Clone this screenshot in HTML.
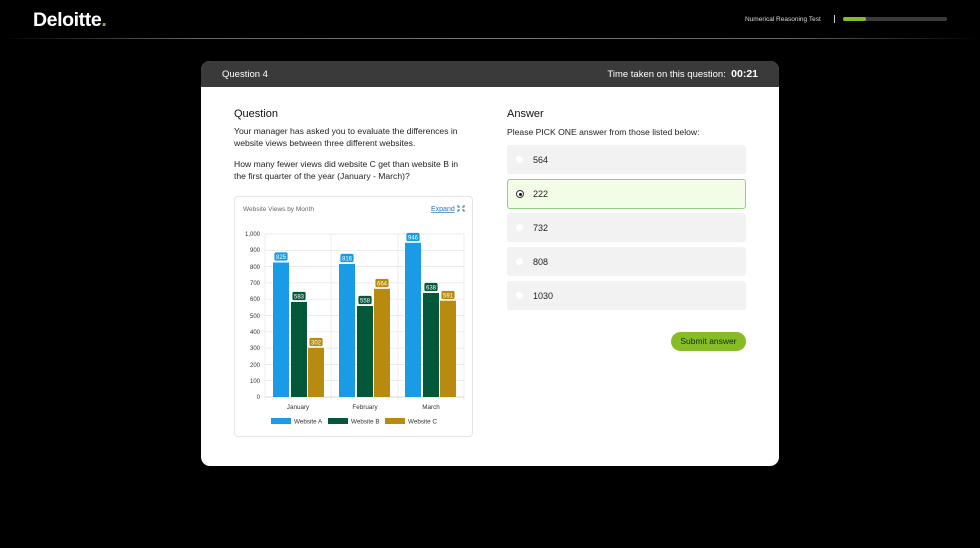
<!DOCTYPE html>
<html><head><meta charset="utf-8"><style>
*{margin:0;padding:0;box-sizing:border-box}
body{width:980px;height:548px;background:#000;font-family:"Liberation Sans",Arial,sans-serif;position:relative;overflow:hidden}
.abs{position:absolute}
.logo{left:33px;top:9px;color:#fff;font-weight:bold;font-size:19.5px;letter-spacing:-0.4px}
.logo span{color:#86bc25}
.hr{left:0;top:38px;width:980px;height:1px;background:linear-gradient(90deg,#000,#666 20%,#777 50%,#666 80%,#000)}
.card{left:201px;top:61px;width:578px;height:405px;background:#fff;border-radius:9px;overflow:hidden}
.hd{left:0;top:0;width:578px;height:26px;background:#3a3a3a;color:#fff;font-size:9px}
.opt{left:507px;width:239px;height:29px;background:#f2f2f2;border-radius:3px;font-size:9px;color:#222}
.opt .r{position:absolute;left:9px;top:11px;width:7px;height:7px;border-radius:50%;background:#fff}
.opt .t{position:absolute;left:26px;top:10px}
p.txt{font-size:8.6px;color:#222;line-height:12px}
</style></head><body>
<div class="abs logo">Deloitte<span>.</span></div>
<div class="abs" style="left:745px;top:16px;color:#ddd;font-size:6.5px">Numerical Reasoning Test</div>
<div class="abs" style="left:834px;top:15px;width:1px;height:8px;background:#ccc"></div>
<div class="abs" style="left:843px;top:17px;width:104px;height:4px;background:#3a3a3a;border-radius:2px"></div>
<div class="abs" style="left:843px;top:17px;width:23px;height:4px;background:#86bc25;border-radius:2px"></div>
<div class="abs hr"></div>
<div class="abs card">
 <div class="abs hd"><span class="abs" style="left:21px;top:8px;font-size:9.5px">Question 4</span><span class="abs" style="right:21px;top:7px;font-size:9.5px">Time taken on this question:&nbsp; <b style="font-size:10.5px">00:21</b></span></div>
</div>
<div class="abs" style="left:234px;top:108px;font-size:11px;color:#111">Question</div>
<p class="abs txt" style="left:234px;top:125px;width:250px">Your manager has asked you to evaluate the differences in<br>website views between three different websites.</p>
<p class="abs txt" style="left:234px;top:158px;width:250px">How many fewer views did website C get than website B in<br>the first quarter of the year (January - March)?</p>
<div class="abs" style="left:234px;top:196px;width:239px;height:241px;border:1px solid #e6e6e6;border-radius:4px"></div>
<svg class="abs" style="left:0;top:0" width="980" height="548" font-family="Liberation Sans,Arial,sans-serif">
<text x="243" y="211" font-size="6.5" fill="#666">Website Views by Month</text>
<text x="431" y="211" font-size="7" fill="#2a7ab0" text-decoration="underline">Expand</text>
<path d="M458 205v2h2M464 205v2h-2M458 212v-2h2M464 212v-2h-2" stroke="#2a7ab0" fill="none" stroke-width="1"/>
<g stroke="#e4e4e4" stroke-width="0.7">
<line x1="265" y1="234" x2="464" y2="234"/><line x1="265" y1="250.3" x2="464" y2="250.3"/><line x1="265" y1="266.6" x2="464" y2="266.6"/><line x1="265" y1="282.9" x2="464" y2="282.9"/><line x1="265" y1="299.2" x2="464" y2="299.2"/><line x1="265" y1="315.5" x2="464" y2="315.5"/><line x1="265" y1="331.8" x2="464" y2="331.8"/><line x1="265" y1="348.1" x2="464" y2="348.1"/><line x1="265" y1="364.4" x2="464" y2="364.4"/><line x1="265" y1="380.7" x2="464" y2="380.7"/>
<line x1="265" y1="234" x2="265" y2="400"/><line x1="331" y1="234" x2="331" y2="400"/><line x1="398" y1="234" x2="398" y2="400"/><line x1="464" y1="234" x2="464" y2="400"/>
</g>
<line x1="265" y1="397" x2="464" y2="397" stroke="#ccc" stroke-width="0.8"/>
<g font-size="6" fill="#333" text-anchor="end">
<text x="260" y="236">1,000</text><text x="260" y="252">900</text><text x="260" y="269">800</text><text x="260" y="285">700</text><text x="260" y="301">600</text><text x="260" y="318">500</text><text x="260" y="334">400</text><text x="260" y="350">300</text><text x="260" y="367">200</text><text x="260" y="383">100</text><text x="260" y="399">0</text>
</g>
<g font-size="6.3" fill="#333" text-anchor="middle"><text x="298" y="409">January</text><text x="365" y="409">February</text><text x="431" y="409">March</text></g>
<g>
<rect x="273" y="262.5" width="16" height="134.5" fill="#1a9be6"/>
<rect x="291" y="302" width="16" height="95" fill="#04583a"/>
<rect x="308" y="347.8" width="16" height="49.2" fill="#b88a10"/>
<rect x="339" y="264" width="16" height="133" fill="#1a9be6"/>
<rect x="357" y="306" width="16" height="91" fill="#04583a"/>
<rect x="374" y="288.8" width="16" height="108.2" fill="#b88a10"/>
<rect x="405" y="242.8" width="16" height="154.2" fill="#1a9be6"/>
<rect x="423" y="293" width="16" height="104" fill="#04583a"/>
<rect x="440" y="300.7" width="16" height="96.3" fill="#b88a10"/>
</g>
<g font-size="6" fill="#fff" text-anchor="middle" stroke="#fff" stroke-width="0.8">
<rect x="274" y="252" width="14" height="9" rx="2" fill="#1a9be6"/><rect x="292" y="291.5" width="14" height="9" rx="2" fill="#04583a"/><rect x="309" y="337.5" width="14" height="9" rx="2" fill="#b88a10"/>
<rect x="340" y="253.5" width="14" height="9" rx="2" fill="#1a9be6"/><rect x="358" y="295.5" width="14" height="9" rx="2" fill="#04583a"/><rect x="375" y="278.5" width="14" height="9" rx="2" fill="#b88a10"/>
<rect x="406" y="232.5" width="14" height="9" rx="2" fill="#1a9be6"/><rect x="424" y="282.5" width="14" height="9" rx="2" fill="#04583a"/><rect x="441" y="290.5" width="14" height="9" rx="2" fill="#b88a10"/>
</g>
<g font-size="6" fill="#fff" text-anchor="middle">
<text x="281" y="259">825</text><text x="299" y="298.5">583</text><text x="316" y="344.5">302</text>
<text x="347" y="260.5">816</text><text x="365" y="302.5">558</text><text x="382" y="285.5">664</text>
<text x="413" y="239.5">946</text><text x="431" y="289.5">638</text><text x="448" y="297.5">591</text>
</g>
<rect x="271" y="418" width="20" height="6" fill="#1a9be6"/><text x="294" y="423.5" font-size="6.3" fill="#333">Website A</text>
<rect x="328" y="418" width="20" height="6" fill="#04583a"/><text x="351" y="423.5" font-size="6.3" fill="#333">Website B</text>
<rect x="385" y="418" width="20" height="6" fill="#b88a10"/><text x="408" y="423.5" font-size="6.3" fill="#333">Website C</text>
</svg>
<div class="abs" style="left:507px;top:108px;font-size:11px;color:#111">Answer</div>
<div class="abs" style="left:507px;top:127px;font-size:8.6px;color:#222">Please PICK ONE answer from those listed below:</div>
<div class="abs opt" style="top:145px"><span class="r"></span><span class="t">564</span></div>
<div class="abs opt" style="top:179px;background:#f3fce6;border:1px solid #8fcf80;height:30px"><span class="r" style="left:8px;top:10px;border:1px solid #333;width:8px;height:8px"><span style="position:absolute;left:1.5px;top:1.5px;width:3px;height:3px;border-radius:50%;background:#111"></span></span><span class="t" style="left:25px;top:9px">222</span></div>
<div class="abs opt" style="top:213px"><span class="r"></span><span class="t">732</span></div>
<div class="abs opt" style="top:247px"><span class="r"></span><span class="t">808</span></div>
<div class="abs opt" style="top:281px"><span class="r"></span><span class="t">1030</span></div>
<div class="abs" style="left:671px;top:332px;width:75px;height:19px;background:#86bc25;border-radius:10px;color:#1a2a10;font-size:8.5px;text-align:center;line-height:19px">Submit answer</div>
</body></html>
